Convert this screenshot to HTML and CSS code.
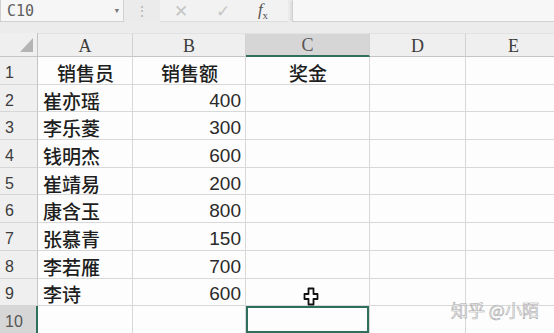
FILE: index.html
```html
<html>
    <head>
        <meta charset="utf-8">
        <link rel="stylesheet" href="styles.css">
    </head>
    <body>
        <div class="app">
            <div class="formula-bar">
                <div class="name-box">
                    <span>C10</span>
                    <span class="drop">&#9660;</span>
                </div>
                <div class="grip">&#8942;</div>
                <div class="fx-buttons">
                    <span class="btn">&#10005;</span>
                    <span class="btn">&#10003;</span>
                    <span class="btn fx"><i>f</i><sub>x</sub></span>
                </div>
                <div class="formula-input"></div>
            </div>

            <div class="sheet">
                <div class="hd corner"><span class="tri"></span></div>
                <div class="hd col">A</div>
                <div class="hd col">B</div>
                <div class="hd col sel-col">C</div>
                <div class="hd col">D</div>
                <div class="hd col">E</div>

                <div class="hd row">1</div>
                <div class="c center">销售员</div>
                <div class="c center">销售额</div>
                <div class="c center">奖金</div>
                <div class="c"></div>
                <div class="c"></div>

                <div class="hd row">2</div>
                <div class="c">崔亦瑶</div>
                <div class="c num">400</div>
                <div class="c"></div><div class="c"></div><div class="c"></div>

                <div class="hd row">3</div>
                <div class="c">李乐菱</div>
                <div class="c num">300</div>
                <div class="c"></div><div class="c"></div><div class="c"></div>

                <div class="hd row">4</div>
                <div class="c">钱明杰</div>
                <div class="c num">600</div>
                <div class="c"></div><div class="c"></div><div class="c"></div>

                <div class="hd row">5</div>
                <div class="c">崔靖易</div>
                <div class="c num">200</div>
                <div class="c"></div><div class="c"></div><div class="c"></div>

                <div class="hd row">6</div>
                <div class="c">康含玉</div>
                <div class="c num">800</div>
                <div class="c"></div><div class="c"></div><div class="c"></div>

                <div class="hd row">7</div>
                <div class="c">张慕青</div>
                <div class="c num">150</div>
                <div class="c"></div><div class="c"></div><div class="c"></div>

                <div class="hd row">8</div>
                <div class="c">李若雁</div>
                <div class="c num">700</div>
                <div class="c"></div><div class="c"></div><div class="c"></div>

                <div class="hd row">9</div>
                <div class="c">李诗</div>
                <div class="c num">600</div>
                <div class="c"></div><div class="c"></div><div class="c"></div>

                <div class="hd row sel-row">10</div>
                <div class="c"></div>
                <div class="c"></div>
                <div class="c active"></div>
                <div class="c"></div>
                <div class="c"></div>

                <svg class="cursor" width="16" height="19" viewBox="0 0 16 19">
                    <path d="M5.5 1.5h5v5.5h4v5h-4v5.5h-5v-5.5h-4v-5h4z" fill="#fff" stroke="#111" stroke-width="1.8" stroke-linejoin="round"/>
                </svg>
                <div class="watermark">知乎 @小陌</div>
            </div>
        </div>
    </body>
</html>
```

FILE: styles.css
```css
body {
    margin: 0px;
    width: 554px;
    height: 333px;
    overflow: hidden;
    background-color: #fcfcfc;
}
.app {
    width: 554px;
    height: 333px;
    display: flex;
    flex-direction: column;
    overflow: hidden;
    background-color: #ececec;
}
.formula-bar {
    height: 22px;
    display: flex;
    align-items: stretch;
    margin-bottom: 11px;
    background-color: #ebebeb;
}
.name-box {
    width: 112px;
    display: flex;
    align-items: center;
    justify-content: space-between;
    padding: 0px 4px 0px 6px;
    background-color: #f6f6f6;
    border: 1px solid #d0d0d0;
    border-top: none;
    font-family: "DejaVu Sans Mono", monospace;
    font-size: 15px;
    color: #606060;
}
.drop {
    font-size: 7px;
    color: #777;
}
.grip {
    width: 36px;
    display: flex;
    align-items: center;
    justify-content: center;
    color: #b5b5b5;
    font-size: 14px;
}
.fx-buttons {
    width: 122px;
    display: flex;
    align-items: center;
    justify-content: space-around;
    padding-right: 6px;
    background-color: #f2f2f2;
    border-bottom: 1px solid #dcdcdc;
}
.btn {
    font-family: "DejaVu Sans", sans-serif;
    font-size: 17px;
    color: #c6c6c6;
}
.fx {
    font-family: "Liberation Serif", serif;
    font-size: 17px;
    color: #555;
}
.fx sub {
    font-size: 11px;
}
.formula-input {
    flex-grow: 1;
    margin-left: 4px;
    background-color: #f7f7f7;
    border-left: 1px solid #d0d0d0;
    border-bottom: 1px solid #d0d0d0;
    box-shadow: -3px 0px 0px -1px #e0e0e0;
}
.sheet {
    position: relative;
    flex-grow: 1;
    display: grid;
    grid-template-columns: 38px 95px 113px 124px 96px 96px;
    grid-template-rows: 24px repeat(10, 27.7px);
    background-color: #fdfdfd;
}
.hd {
    background-color: #efefef;
    border-right: 1px solid #d2d2d2;
    border-bottom: 1px solid #c4c4c4;
    display: flex;
    box-sizing: border-box;
    color: #3c3c3c;
}
.corner {
    align-items: flex-end;
    justify-content: flex-end;
    padding: 0px 4px 4px 0px;
    border-right: 1px solid #c4c4c4;
}
.tri {
    width: 0px;
    height: 0px;
    border-left: 13px solid transparent;
    border-bottom: 14px solid #b4b4b4;
}
.col {
    align-items: flex-end;
    justify-content: center;
    padding-bottom: 1px;
    font-family: "Liberation Serif", serif;
    font-size: 18px;
    line-height: 1;
    border-top: 1px solid #e2e2e2;
}
.sel-col {
    background-color: #d6d6d6;
    border-bottom: 2px solid #2f6f5e;
    color: #555;
}
.row {
    align-items: center;
    padding: 5px 0px 0px 5px;
    font-family: "Liberation Sans", sans-serif;
    font-size: 16px;
    border-right: 1px solid #c4c4c4;
    border-bottom: 1px solid #d6d6d6;
}
.sel-row {
    background-color: #d6d6d6;
    border-right: 2px solid #2f6f5e;
    color: #555;
}
.c {
    box-sizing: border-box;
    border-right: 1px solid #d8d8d8;
    border-bottom: 1px solid #d8d8d8;
    display: flex;
    align-items: center;
    padding: 4px 4px 0px 5px;
    font-family: "Noto Sans CJK SC", sans-serif;
    font-weight: 500;
    font-size: 19px;
    line-height: 1;
    color: #1e1e1e;
    white-space: nowrap;
}
.center {
    justify-content: center;
}
.num {
    justify-content: flex-end;
    font-family: "Liberation Sans", sans-serif;
    font-weight: normal;
    color: #2a2a2a;
}
.active {
    box-shadow: inset 0px 0px 0px 2px #2f6f5e;
}
.cursor {
    position: absolute;
    left: 303px;
    top: 254px;
}
.watermark {
    position: absolute;
    left: 451px;
    top: 264px;
    font-family: "Noto Sans CJK SC", sans-serif;
    font-size: 17px;
    color: #ffffff;
    -webkit-text-stroke: 0.6px #a0a0a0;
    opacity: 0.9;
    white-space: nowrap;
}
```
